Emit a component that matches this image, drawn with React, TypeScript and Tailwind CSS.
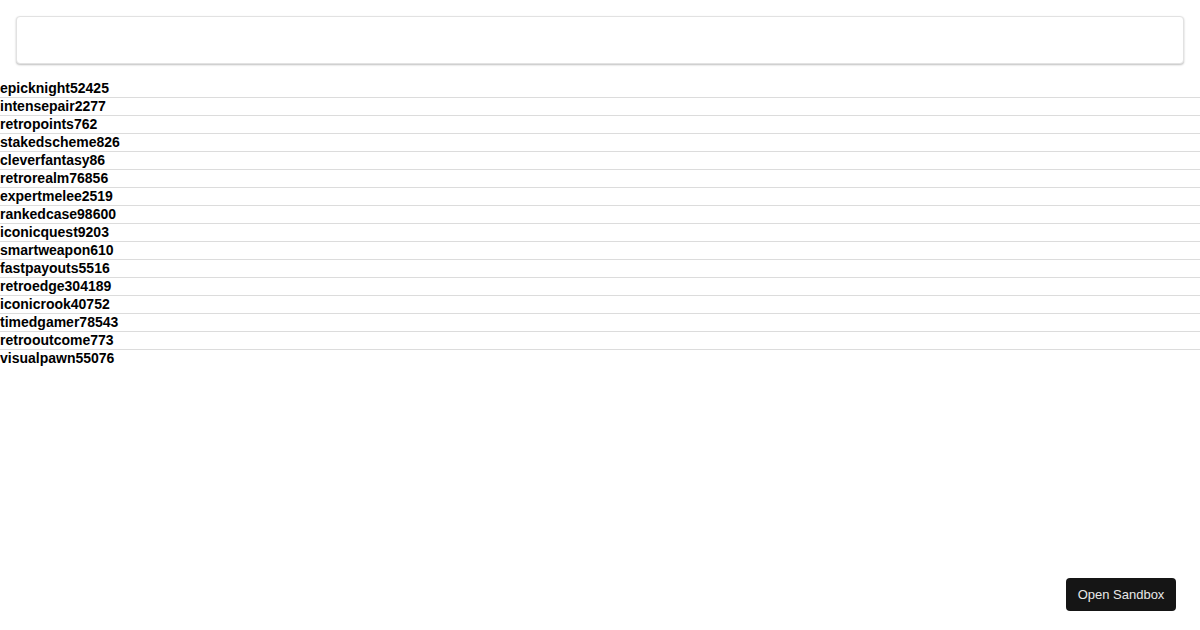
const USERS = [
  'epicknight52425',
  'intensepair2277',
  'retropoints762',
  'stakedscheme826',
  'cleverfantasy86',
  'retrorealm76856',
  'expertmelee2519',
  'rankedcase98600',
  'iconicquest9203',
  'smartweapon610',
  'fastpayouts5516',
  'retroedge304189',
  'iconicrook40752',
  'timedgamer78543',
  'retrooutcome773',
  'visualpawn55076',
]

export default function App() {
  return (
    <div className="min-h-screen bg-white font-['Liberation_Sans',Arial,sans-serif] text-black">
      {/* Search card */}
      <div className="p-4">
        <div className="h-12 rounded border border-[#e2e2e2] bg-white shadow-[0_1px_2px_rgba(0,0,0,0.25)]" />
      </div>

      {/* User list */}
      <ul>
        {USERS.map((name, i) => (
          <li
            key={name}
            className={
              'h-[18px] text-[14px] font-bold leading-[17px] ' +
              (i < USERS.length - 1 ? 'border-b border-[#dcdcdc]' : '')
            }
          >
            {name}
          </li>
        ))}
      </ul>

      <button className="fixed bottom-[19px] right-6 h-[33px] w-[110px] rounded bg-[#151515] text-[13px] text-[#e8e8e8] font-['Liberation_Sans',Arial,sans-serif]">
        Open Sandbox
      </button>
    </div>
  )
}
